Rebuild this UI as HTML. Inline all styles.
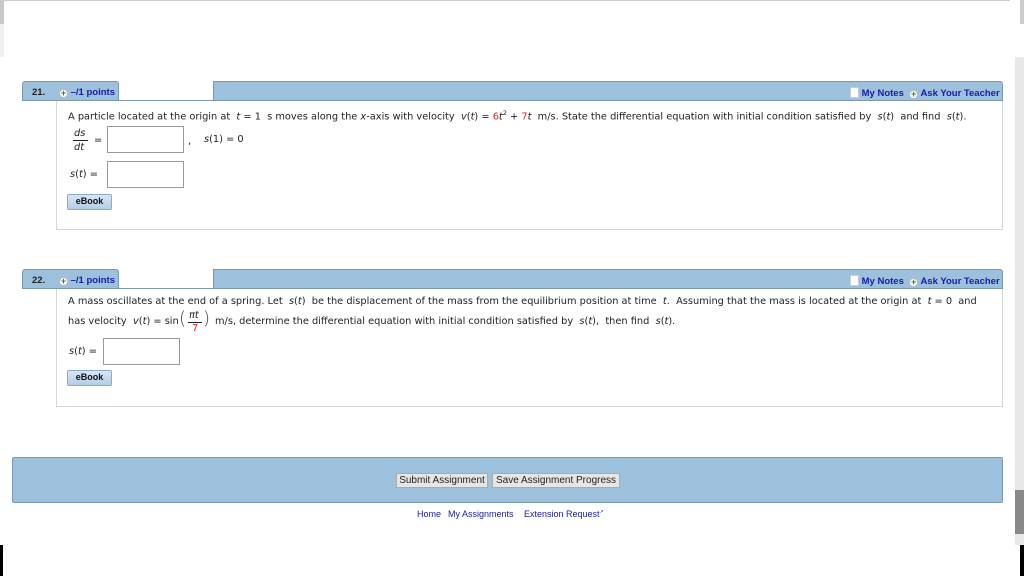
<!DOCTYPE html>
<html><head><meta charset="utf-8"><style>
*{margin:0;padding:0;box-sizing:border-box}
body{width:1024px;height:576px;background:#fff;position:relative;overflow:hidden;font-family:"DejaVu Sans","Liberation Sans",sans-serif;font-size:9.8px;color:#222}
.a{position:absolute}
.tab{position:absolute;background:#9dc0dd;border:1px solid #7d98b3;border-bottom:none;border-radius:3px 3px 0 0}
.lbl{font-family:"Liberation Sans",sans-serif;font-weight:bold;font-size:9.5px;color:#1a1aa6;white-space:nowrap}
.num{color:#222}
.plus{display:inline-block;width:9px;height:9px;border-radius:50%;background:#fff;border:1px solid #bbb;color:#2a8a2a;font-size:9px;line-height:7px;text-align:center;vertical-align:-1px}
.box{position:absolute;border:1px solid #d6d6d6;border-top:none;background:#fff}
.inp{position:absolute;border:1px solid #9a9a9a;background:#fff}
.eb{position:absolute;background:linear-gradient(#d7e6f6,#b3cde8);border:1px solid #8eaacb;border-radius:2px;font-family:"Liberation Sans",sans-serif;font-weight:bold;font-size:9px;color:#111;text-align:center;line-height:13px}
.t{position:absolute;white-space:nowrap}
i{font-style:italic}
.r{color:#d22}
.btn{position:absolute;background:#e6e6e6;border:1px solid #aaa;font-family:"Liberation Sans",sans-serif;font-size:10px;color:#222;text-align:center;line-height:13px}
.lk{position:absolute;font-family:"Liberation Sans",sans-serif;font-size:9px;color:#1a1aa6;white-space:nowrap}
.note{display:inline-block;width:9px;height:11px;background:#fff;border:1px solid #ccc;vertical-align:-2px}
</style></head><body>
<div class="a" style="left:0;top:0;width:1010px;height:1px;background:#ccc"></div>
<div class="a" style="left:0;top:0;width:4px;height:24px;background:#c8c8c8"></div>
<div class="a" style="left:0;top:24px;width:4px;height:33px;background:#f0f0f0"></div>
<div class="a" style="left:0;top:545px;width:3px;height:31px;background:#000"></div>
<div class="a" style="left:1020px;top:0;width:4px;height:24px;background:#ccc"></div>
<div class="a" style="left:1015px;top:57px;width:9px;height:488px;background:#e8e8e8"></div>
<div class="a" style="left:1015px;top:490px;width:9px;height:44px;background:#888"></div>
<div class="a" style="left:1020px;top:545px;width:4px;height:31px;background:#000"></div>

<!-- Q21 -->
<div class="tab" style="left:22px;top:81px;width:97px;height:20px"></div>
<div class="tab" style="left:213px;top:81px;width:790px;height:20px;border-radius:0 3px 0 0"></div>
<div class="a" style="left:22px;top:100px;width:981px;height:1px;background:#7d98b3"></div>
<div class="lbl a" style="left:32px;top:87px"><span class="num">21.</span></div>
<div class="lbl a" style="left:59px;top:87px"><span class="plus">+</span> –/1 points</div>
<div class="lbl a" style="left:850px;top:87px"><span class="note"></span> My Notes &nbsp;<span class="plus">+</span> Ask Your Teacher</div>
<div class="box" style="left:56px;top:101px;width:947px;height:129px"></div>
<div class="t" style="left:68px;top:109px">A particle located at the origin at &nbsp;<i>t</i> = 1 &nbsp;s moves along the <i>x</i>-axis with velocity &nbsp;<i>v</i>(<i>t</i>) = <span class="r">6</span><i>t</i><sup style="font-size:6.5px">2</sup> + <span class="r">7</span><i>t</i> &nbsp;m/s. State the differential equation with initial condition satisfied by &nbsp;<i>s</i>(<i>t</i>) &nbsp;and find &nbsp;<i>s</i>(<i>t</i>).</div>
<div class="t" style="left:74px;top:128px"><i>ds</i></div>
<div class="a" style="left:73px;top:140px;width:15px;height:1px;background:#222"></div>
<div class="t" style="left:74px;top:142px"><i>dt</i></div>
<div class="t" style="left:94px;top:135px">=</div>
<div class="inp" style="left:107px;top:126px;width:77px;height:27px"></div>
<div class="t" style="left:188px;top:136px">,</div>
<div class="t" style="left:204px;top:134px"><i>s</i>(1) = 0</div>
<div class="t" style="left:70px;top:169px"><i>s</i>(<i>t</i>) =</div>
<div class="inp" style="left:107px;top:161px;width:77px;height:27px"></div>
<div class="eb" style="left:67px;top:194px;width:45px;height:16px">eBook</div>

<!-- Q22 -->
<div class="tab" style="left:22px;top:269px;width:97px;height:20px"></div>
<div class="tab" style="left:213px;top:269px;width:790px;height:20px;border-radius:0 3px 0 0"></div>
<div class="a" style="left:22px;top:288px;width:981px;height:1px;background:#7d98b3"></div>
<div class="lbl a" style="left:32px;top:275px"><span class="num">22.</span></div>
<div class="lbl a" style="left:59px;top:275px"><span class="plus">+</span> –/1 points</div>
<div class="lbl a" style="left:850px;top:275px"><span class="note"></span> My Notes &nbsp;<span class="plus">+</span> Ask Your Teacher</div>
<div class="box" style="left:56px;top:289px;width:947px;height:118px"></div>
<div class="t" style="left:68px;top:296px">A mass oscillates at the end of a spring. Let &nbsp;<i>s</i>(<i>t</i>) &nbsp;be the displacement of the mass from the equilibrium position at time &nbsp;<i>t</i>. &nbsp;Assuming that the mass is located at the origin at &nbsp;<i>t</i> = 0 &nbsp;and</div>
<div class="t" style="left:68px;top:316px">has velocity &nbsp;<i>v</i>(<i>t</i>) = sin</div>
<div class="t" style="left:179px;top:308px;font-size:18px;font-weight:100;color:#444">(</div>
<div class="t" style="left:189px;top:310px"><i>πt</i></div>
<div class="a" style="left:188px;top:322px;width:14px;height:1px;background:#222"></div>
<div class="t r" style="left:192px;top:323px">7</div>
<div class="t" style="left:203px;top:308px;font-size:18px;font-weight:100;color:#444">)</div>
<div class="t" style="left:215px;top:316px">m/s, determine the differential equation with initial condition satisfied by &nbsp;<i>s</i>(<i>t</i>), &nbsp;then find &nbsp;<i>s</i>(<i>t</i>).</div>
<div class="t" style="left:69px;top:346px"><i>s</i>(<i>t</i>) =</div>
<div class="inp" style="left:103px;top:338px;width:77px;height:27px"></div>
<div class="eb" style="left:67px;top:370px;width:45px;height:16px">eBook</div>

<!-- bottom -->
<div class="a" style="left:12px;top:457px;width:991px;height:46px;background:#9dc0dd;border:1px solid #7d98b3;border-radius:2px"></div>
<div class="btn" style="left:396px;top:473px;width:92px;height:15px">Submit Assignment</div>
<div class="btn" style="left:492px;top:473px;width:128px;height:15px">Save Assignment Progress</div>
<div class="lk" style="left:417px;top:509px">Home</div>
<div class="lk" style="left:448px;top:509px">My Assignments</div>
<div class="lk" style="left:524px;top:509px">Extension Request<sup style="font-size:5px">↗</sup></div>
</body></html>
